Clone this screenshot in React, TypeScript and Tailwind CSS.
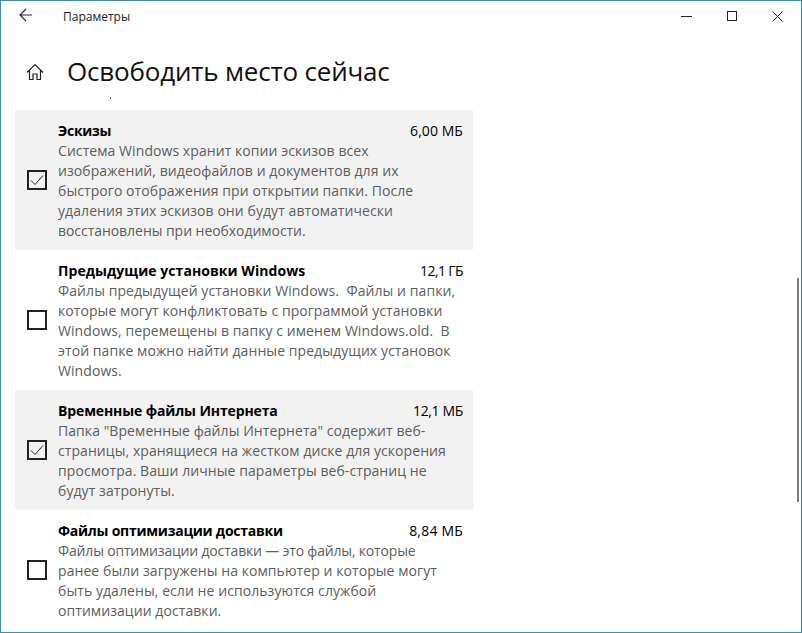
import React from "react";

const rows = [
  { t: "Эскизы", tt: "tracking-[-0.3px]", s: "6,00 МБ", st: "tracking-[0.07px]", c: true, l: ["Система Windows хранит копии эскизов всех", "изображений, видеофайлов и документов для их", "быстрого отображения при открытии папки. После", "удаления этих эскизов они будут автоматически", "восстановлены при необходимости."] },
  { t: "Предыдущие установки Windows", tt: "tracking-[0.05px]", s: "12,1 ГБ", st: "tracking-[-0.6px]", c: false, l: ["Файлы предыдущей установки Windows.  Файлы и папки,", "которые могут конфликтовать с программой установки", "Windows, перемещены в папку с именем Windows.old.  В", "этой папке можно найти данные предыдущих установок", "Windows."] },
  { t: "Временные файлы Интернета", tt: "tracking-[-0.13px]", s: "12,1 МБ", st: "tracking-[-0.35px]", c: true, l: ["Папка \"Временные файлы Интернета\" содержит веб-", "страницы, хранящиеся на жестком диске для ускорения", "просмотра. Ваши личные параметры веб-страниц не", "будут затронуты."] },
  { t: "Файлы оптимизации доставки", tt: "tracking-[-0.25px]", s: "8,84 МБ", st: "tracking-[0.2px]", c: false, l: ["Файлы оптимизации доставки — это файлы, которые", "ранее были загружены на компьютер и которые могут", "быть удалены, если не используются службой", "оптимизации доставки."] },
];

const tightLines: Record<string, string> = {
  "Файлы оптимизации доставки — это файлы, которые": "tracking-[-0.18px]",
  "восстановлены при необходимости.": "tracking-[-0.05px]",
};

function Row({ r }: { r: (typeof rows)[number] }) {
  return (
    <div className={`flex items-center py-[10px] pl-3 pr-[10px] ${r.c ? "bg-[#f2f2f2]" : "bg-white"}`}>
      <div className="w-5 h-5 shrink-0 border-2 border-[#222222] flex items-center justify-center">
        {r.c && (
          <svg width="14" height="14" viewBox="0 0 14 14" fill="none" stroke="#222" strokeWidth="1">
            <path d="M1 7.5 L5 11.5 L13 2.5" />
          </svg>
        )}
      </div>
      <div className="ml-[11px] flex-1 min-w-0 translate-y-px">
        <div className="flex justify-between text-black text-[14px] leading-5 font-bold">
          <span className={r.tt}>{r.t}</span>
          <span className={`font-normal ${r.st}`}>{r.s}</span>
        </div>
        {r.l.map((x, i) => (
          <div key={i} className={`text-[#5d5d5d] text-[14px] leading-5 whitespace-pre ${tightLines[x] ?? "tracking-[0.07px]"}`}>{x}</div>
        ))}
      </div>
    </div>
  );
}

export default function App() {
  return (
    <div className="relative w-[802px] h-[633px] overflow-hidden bg-white border border-[#3f8ea6] flex flex-col font-['Open_Sans','Noto_Sans',sans-serif]">
      <div className="h-[32px] shrink-0 flex items-center">
        <svg className="ml-[18px] -translate-y-0.5" width="14" height="14" viewBox="0 0 14 14" fill="none" stroke="#222" strokeWidth="1.1">
          <path d="M13 7H1M7 1L1 7l6 6" />
        </svg>
        <span className="ml-[30px] text-[12px] text-[#222]">Параметры</span>
        <div className="ml-auto flex items-center mr-[18px] gap-[35px] -translate-y-px">
          <div className="w-[11px] h-px bg-[#222]" />
          <div className="w-[10px] h-[10px] border border-[#222]" />
          <svg width="11" height="11" viewBox="0 0 11 11" stroke="#222" strokeWidth="1"><path d="M0.5 0.5l10 10M10.5 0.5l-10 10" /></svg>
        </div>
      </div>
      <div className="h-[77px] shrink-0 flex items-center">
        <svg className="ml-[25px]" width="18" height="18" viewBox="0 0 18 18" fill="none" stroke="#222" strokeWidth="1.2">
          <path d="M1 9.5L9 1.5l8 8M3.5 7.5V16.5H7V11h4v5.5h3.5V7.5" />
        </svg>
        <h1 className="ml-[23px] text-[26px] leading-8 text-[#111] font-normal tracking-[-0.2px] -translate-y-px">Освободить место сейчас</h1>
      </div>
      <div className="ml-[14px] w-[458px] shrink-0">
        {rows.map((r) => <Row key={r.t} r={r} />)}
      </div>
      <div className="absolute left-[109px] top-[96px] w-px h-[2px] bg-[#777]" />
      <div className="absolute left-[796px] top-[277px] w-[2px] h-[224px] bg-[#7d7d7d]" />
    </div>
  );
}
